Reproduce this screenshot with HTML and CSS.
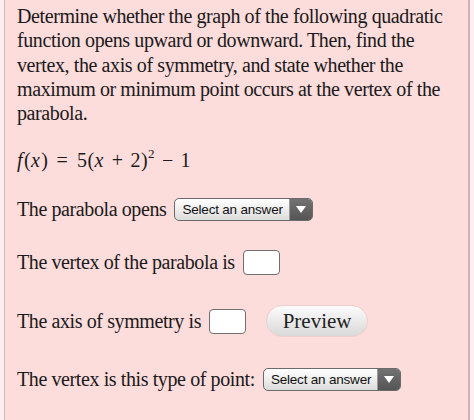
FILE: index.html
```html
<!DOCTYPE html>
<html lang="en">
<head>
    <meta charset="UTF-8">
    <meta name="viewport" content="width=device-width, initial-scale=1.0">
    <title>Quadratic question</title>
    <link rel="stylesheet" href="styles.css">
</head>
<body>

<div class="question">
    <p class="prompt">Determine whether the graph of the following quadratic function opens upward or downward. Then, find the vertex, the axis of symmetry, and state whether the maximum or minimum point occurs at the vertex of the parabola.</p>

    <p class="math"><i>f</i>(<i>x</i>)<span class="op">=</span>5(<i>x</i><span class="op sm">+</span>2)<sup>2</sup><span class="op sm">&minus;</span>1</p>

    <div class="row first">
        <span>The parabola opens</span>
        <div class="select">
            <span class="select-text">Select an answer</span>
            <span class="select-arrow"></span>
        </div>
    </div>

    <div class="row">
        <span>The vertex of the parabola is</span>
        <input type="text" class="answer">
    </div>

    <div class="row tall">
        <span>The axis of symmetry is</span>
        <input type="text" class="answer">
        <button class="preview">Preview</button>
    </div>

    <div class="row last">
        <span>The vertex is this type of point:</span>
        <div class="select">
            <span class="select-text">Select an answer</span>
            <span class="select-arrow"></span>
        </div>
    </div>
</div>

</body>
</html>
```

FILE: styles.css
```css
* { margin: 0; padding: 0; box-sizing: border-box; }
body {
    background: #fcefef;
    font-family: "Liberation Serif", "Times New Roman", serif;
    color: #1a1a1a;
}
.question {
    margin: 0 4px 0 4px;
    min-height: 420px;
    background: #fddcdc;
    border-left: 1px solid #d8b6bb;
    border-right: 2px solid #d2b0b6;
    padding: 4px 8px 0 12px;
    font-size: 20px;
    letter-spacing: -0.4px;
    line-height: 24.3px;
}
.prompt { margin: 0; }
.math {
    margin-top: 23px;
    height: 24px;
    font-size: 20px;
    line-height: 24px;
    letter-spacing: 0.4px;
}
.math i { margin-right: 1px; }
.math .op { margin: 0 9px 0 8px; }
.math .op.sm { margin: 0 7px; }
.math sup { font-size: 13px; line-height: 0; vertical-align: 9px; }
.row {
    display: flex;
    align-items: center;
    margin-top: 27px;
    height: 26px;
}
.row.first { margin-top: 24px; }
.row.tall { height: 32px; margin-top: 30px; }
.row.last { margin-top: 29px; }
.row > span { margin-right: 8px; }

.select {
    display: flex;
    height: 23px;
    border: 1px solid #6b6b6b;
    border-radius: 5px;
    overflow: hidden;
    background: linear-gradient(#ffffff, #dcdcdc);
    font-family: "Liberation Sans", Arial, sans-serif;
    font-size: 13.5px;
    letter-spacing: -0.2px;
    line-height: 21px;
    color: #111;
}
.select-text { padding: 0 6px 0 7px; }
.select-arrow {
    width: 23px;
    background: linear-gradient(#727272, #555);
    border-left: 1px solid #9a9a9a;
    position: relative;
}
.select-arrow::after {
    content: "";
    position: absolute;
    left: 6px;
    top: 7px;
    border-left: 5px solid transparent;
    border-right: 5px solid transparent;
    border-top: 7px solid #fff;
}
.answer {
    width: 37px;
    height: 25px;
    border: 1px solid #6f6f6f;
    border-radius: 4px;
    background: #fff;
}
.preview {
    margin-left: 20px;
    width: 102px;
    height: 32px;
    border: 1px solid #eecfcf;
    border-radius: 16px;
    background: linear-gradient(#fbfbfb, #d9d9d9);
    font-family: "Liberation Serif", "Times New Roman", serif;
    font-size: 21px;
    color: #222;
}
```
